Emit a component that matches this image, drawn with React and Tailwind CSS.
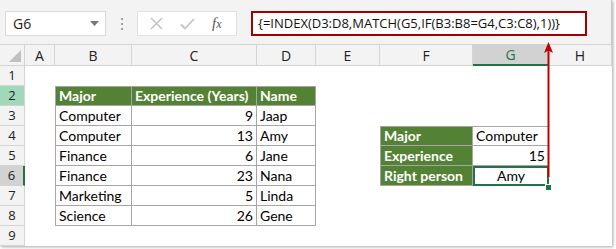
import { Fragment } from 'react'

const COLS = ['A', 'B', 'C', 'D', 'E', 'F', 'G', 'H']
const ROWS = [1, 2, 3, 4, 5, 6, 7, 8, 9]

const DATA = [
  ['Computer', 9, 'Jaap'],
  ['Computer', 13, 'Amy'],
  ['Finance', 6, 'Jane'],
  ['Finance', 23, 'Nana'],
  ['Marketing', 5, 'Linda'],
  ['Science', 26, 'Gene'],
]

// contents of each used cell, keyed like 'B3'
const CELLS = {}
CELLS.B2 = { text: 'Major', head: true, first: true, top: true }
CELLS.C2 = { text: 'Experience (Years)', head: true, top: true }
CELLS.D2 = { text: 'Name', head: true, top: true }
DATA.forEach((row, i) => {
  const r = i + 3
  CELLS['B' + r] = { text: row[0], first: true }
  CELLS['C' + r] = { text: row[1], right: true }
  CELLS['D' + r] = { text: row[2] }
})
CELLS.F4 = { text: 'Major', head: true, first: true, top: true }
CELLS.F5 = { text: 'Experience', head: true, first: true }
CELLS.F6 = { text: 'Right person', head: true, first: true }
CELLS.G4 = { text: 'Computer', top: true }
CELLS.G5 = { text: '15', right: true }
CELLS.G6 = { text: 'Amy', center: true, selected: true }

function Cell({ id }) {
  const c = CELLS[id]
  if (!c) return <div className="bg-white" />
  if (c.selected) {
    return (
      <div className="bg-white border-2 border-[#217346] flex items-center justify-center text-[14px] leading-none text-black whitespace-nowrap">
        {c.text}
      </div>
    )
  }
  return (
    <div
      className={[
        'flex items-center px-[3px] text-[14px] leading-none whitespace-nowrap border-r border-b border-[#a6a6a6]',
        c.first ? 'border-l' : '',
        c.top ? 'border-t' : '',
        c.head ? 'bg-[#548235] text-white font-bold' : 'bg-white text-black',
        c.right ? 'justify-end' : '',
        c.center ? 'justify-center' : '',
      ].join(' ')}
    >
      {c.text}
    </div>
  )
}

function FormulaBar() {
  return (
    <div className="h-[45px] bg-[#f3f3f3] flex items-start pt-[11px] border-b border-[#d4d4d4]" style={{ fontFamily: '"Open Sans", sans-serif' }}>
      <div className="ml-[5px] w-[101px] h-[25px] bg-white border border-[#dadada] flex items-center justify-between pl-[7px] pr-[6px] text-[14px] text-[#222]">
        <span>G6</span>
        <svg width="9" height="5" viewBox="0 0 9 5"><path d="M0 0h9L4.5 5z" fill="#777" /></svg>
      </div>
      <div className="w-[31px] h-[25px] flex flex-col items-center justify-center gap-[3px]">
        <span className="w-[2px] h-[2px] bg-[#a0a0a0]" />
        <span className="w-[2px] h-[2px] bg-[#a0a0a0]" />
        <span className="w-[2px] h-[2px] bg-[#a0a0a0]" />
      </div>
      <div className="w-[100px] h-[25px] bg-white border border-[#e2e2e2] flex items-center justify-between pl-[12px] pr-[4px]">
        <svg width="13" height="13" viewBox="0 0 13 13"><path d="M1 1l11 11M12 1L1 12" stroke="#c4c4c4" strokeWidth="1.6" /></svg>
        <svg width="15" height="12" viewBox="0 0 15 12"><path d="M1 6.5l4 4L14 1" stroke="#c4c4c4" strokeWidth="1.8" fill="none" /></svg>
        <span className="text-[15px] italic text-[#555] w-[20px]" style={{ fontFamily: '"Liberation Serif", serif' }}>
          f<span className="text-[12px]">x</span>
        </span>
      </div>
      <div className="ml-[14px] w-[336px] h-[25px] bg-white border-2 border-[#a00000] flex items-center pl-[5px] text-[13px] text-[#111] whitespace-nowrap">
        {'{=INDEX(D3:D8,MATCH(G5,IF(B3:B8=G4,C3:C8),1))}'}
      </div>
    </div>
  )
}

export default function App() {
  return (
    <div className="w-[616px] h-[249px] bg-white overflow-hidden">
      <div className="relative w-[612px] h-[246px] shadow-[1px_1px_3px_rgba(0,0,0,0.35)] border-r border-[#c8c8c8]">
        <FormulaBar />

        {/* ─── Sheet ─── */}
        <div
          className="grid grid-cols-[25px_30px_77px_125px_59px_64px_93px_76px_63px] grid-rows-[21px_repeat(9,20px)]"
          style={{ fontFamily: 'Lato, "Liberation Sans", sans-serif' }}
        >
          <div className="bg-[#f3f3f3] border-r border-b border-[#d4d4d4] flex items-end justify-end p-[3px]">
            <svg width="12" height="12" viewBox="0 0 12 12"><path d="M12 0v12H0z" fill="#c0c0c0" /></svg>
          </div>
          {COLS.map(col => (
            <div
              key={col}
              className={
                col === 'G'
                  ? 'bg-[#d2d2d2] border-r border-b-2 border-r-[#c6c6c6] border-b-[#217346] flex items-center justify-center text-[14px] text-[#217346]'
                  : 'bg-[#f3f3f3] border-r border-b border-[#d4d4d4] flex items-center justify-center text-[14px] text-[#222]'
              }
              style={{ fontFamily: '"Open Sans", sans-serif' }}
            >
              {col}
            </div>
          ))}

          {ROWS.map(r => (
            <Fragment key={r}>
              <div
                className={
                  r === 6
                    ? 'bg-[#d2d2d2] border-r-2 border-b border-r-[#217346] border-b-[#d4d4d4] flex items-center justify-center text-[13px] text-[#222]'
                    : r === 2
                      ? 'bg-[#a0d8b9] border-r border-b border-[#d4d4d4] flex items-center justify-center text-[13px] text-[#222]'
                      : 'bg-[#f3f3f3] border-r border-b border-[#d4d4d4] flex items-center justify-center text-[13px] text-[#222]'
                }
                style={{ fontFamily: '"Open Sans", sans-serif' }}
              >
                {r}
              </div>
              {COLS.map(col => (
                <Cell key={col + r} id={col + r} />
              ))}
            </Fragment>
          ))}
        </div>

        {/* red arrow from G6 up to the formula box */}
        <svg className="absolute left-[542px] top-[40px]" width="13" height="140" viewBox="0 0 13 140">
          <path d="M6.5 8V137" stroke="#c00000" strokeWidth="2" />
          <path d="M6.5 2L11 13L6.5 10.5L2 13z" fill="#c00000" />
        </svg>

        {/* fill handle */}
        <div className="absolute left-[545px] top-[184px] w-[7px] h-[7px] bg-[#217346] border border-white" />
      </div>
    </div>
  )
}
